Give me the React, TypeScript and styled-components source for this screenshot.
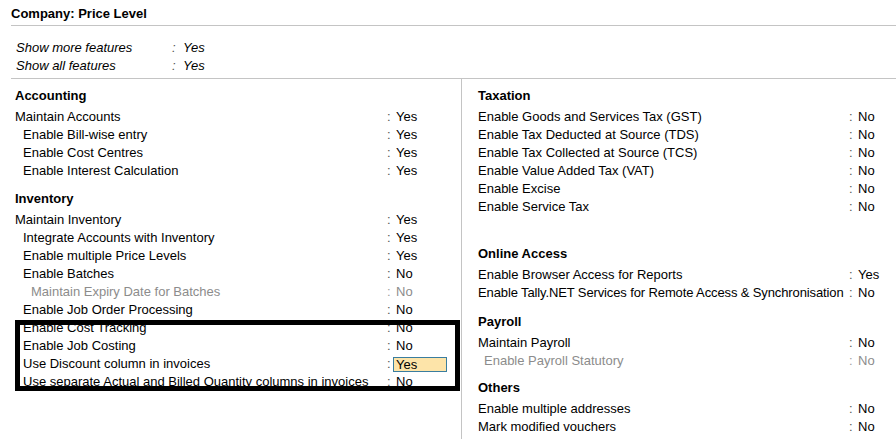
import React from "react";
import styled, { createGlobalStyle, css } from "styled-components";

const Global = createGlobalStyle`
  html, body { margin: 0; padding: 0; background: #ffffff; }
  body {
    font-family: "Liberation Sans", Arial, sans-serif;
    font-size: 13px;
    color: #000;
    width: 896px;
    height: 439px;
    overflow: hidden;
  }
`;

const Page = styled.div`
  width: 896px;
  height: 439px;
  display: flex;
  flex-direction: column;
  background: #fff;
`;

const Title = styled.div`
  height: 25px;
  line-height: 28px;
  padding-left: 11px;
  font-weight: bold;
  font-size: 13px;
`;

const Rule = styled.div`
  margin-left: 11px;
  height: 1px;
  background: #c4c4c4;
`;

const Features = styled.div`
  padding: 13px 0 3px 16px;
`;

const FeatureRow = styled.div`
  display: grid;
  grid-template-columns: 156px 11px auto;
  height: 18px;
  line-height: 18px;
  font-style: italic;
`;

const FeatureColon = styled.span`
  color: #555;
`;

const Main = styled.div`
  flex: 1;
  display: grid;
  grid-template-columns: 461px 1fr;
`;

const Column = styled.div<{ $right?: boolean }>`
  padding-top: 8px;
  padding-left: ${(p) => (p.$right ? "16px" : "15px")};
  ${(p) =>
    p.$right &&
    css`
      border-left: 1px solid #c4c4c4;
    `}
`;

const Section = styled.div<{ $gap?: number }>`
  margin-top: ${(p) => p.$gap ?? 0}px;
`;

const Heading = styled.div`
  height: 18px;
  line-height: 18px;
  font-weight: bold;
  margin-bottom: 3px;
`;

const Row = styled.div<{ $labelWidth: number }>`
  display: grid;
  grid-template-columns: ${(p) => p.$labelWidth}px 9px auto;
  height: 18px;
  line-height: 18px;
  white-space: nowrap;
`;

const Label = styled.span<{ $indent: number; $dim?: boolean; $tight?: boolean }>`
  padding-left: ${(p) => p.$indent}px;
  color: ${(p) => (p.$dim ? "#8c8c8c" : "#000")};
  letter-spacing: ${(p) => (p.$tight ? "-0.12px" : "normal")};
  overflow: hidden;
`;

const Colon = styled.span<{ $dim?: boolean }>`
  color: ${(p) => (p.$dim ? "#a0a0a0" : "#555")};
`;

const Value = styled.span<{ $dim?: boolean; $active?: boolean }>`
  color: ${(p) => (p.$dim ? "#8c8c8c" : "#000")};
  ${(p) =>
    p.$active &&
    css`
      box-sizing: border-box;
      width: 54px;
      height: 15px;
      line-height: 13px;
      margin: 2px 0 0 -3px;
      padding-left: 2px;
      background: #fde4a9;
      border: 1px solid #3a7d9f;
    `}
`;

const Spacer = styled.div`
  height: 18px;
`;

const Marked = styled.div`
  position: relative;
  &::after {
    content: "";
    position: absolute;
    left: 0;
    right: 1px;
    top: 1px;
    bottom: 0;
    border: 5px solid #000;
    pointer-events: none;
  }
`;

type Item = {
  label: string;
  value: string;
  indent?: number;
  dim?: boolean;
  active?: boolean;
  tight?: boolean;
};

const Line = ({ item, w }: { item: Item; w: number }) => (
  <Row $labelWidth={w}>
    <Label $indent={item.indent ?? 0} $dim={item.dim} $tight={item.tight}>
      {item.label}
    </Label>
    <Colon $dim={item.dim}>:</Colon>
    <Value $dim={item.dim} $active={item.active}>
      {item.value}
    </Value>
  </Row>
);

const LW = 372;
const RW = 371;

const accounting: Item[] = [
  { label: "Maintain Accounts", value: "Yes" },
  { label: "Enable Bill-wise entry", value: "Yes", indent: 8 },
  { label: "Enable Cost Centres", value: "Yes", indent: 8 },
  { label: "Enable Interest Calculation", value: "Yes", indent: 8 },
];

const inventory: Item[] = [
  { label: "Maintain Inventory", value: "Yes" },
  { label: "Integrate Accounts with Inventory", value: "Yes", indent: 8 },
  { label: "Enable multiple Price Levels", value: "Yes", indent: 8 },
  { label: "Enable Batches", value: "No", indent: 8 },
  { label: "Maintain Expiry Date for Batches", value: "No", indent: 16, dim: true },
  { label: "Enable Job Order Processing", value: "No", indent: 8 },
];

const marked: Item[] = [
  { label: "Enable Cost Tracking", value: "No", indent: 8 },
  { label: "Enable Job Costing", value: "No", indent: 8 },
  { label: "Use Discount column in invoices", value: "Yes", indent: 8, active: true },
  { label: "Use separate Actual and Billed Quantity columns in invoices", value: "No", indent: 8 },
];

const taxation: Item[] = [
  { label: "Enable Goods and Services Tax (GST)", value: "No" },
  { label: "Enable Tax Deducted at Source (TDS)", value: "No" },
  { label: "Enable Tax Collected at Source (TCS)", value: "No" },
  { label: "Enable Value Added Tax (VAT)", value: "No" },
  { label: "Enable Excise", value: "No" },
  { label: "Enable Service Tax", value: "No" },
];

const online: Item[] = [
  { label: "Enable Browser Access for Reports", value: "Yes" },
  {
    label: "Enable Tally.NET Services for Remote Access & Synchronisation",
    value: "No",
    tight: true,
  },
];

const payroll: Item[] = [
  { label: "Maintain Payroll", value: "No" },
  { label: "Enable Payroll Statutory", value: "No", indent: 6, dim: true },
];

const others: Item[] = [
  { label: "Enable multiple addresses", value: "No" },
  { label: "Mark modified vouchers", value: "No" },
];

export default function App() {
  return (
    <Page>
      <Global />
      <Title>Company: Price Level</Title>
      <Rule />
      <Features>
        <FeatureRow>
          <span>Show more features</span>
          <FeatureColon>:</FeatureColon>
          <span>Yes</span>
        </FeatureRow>
        <FeatureRow>
          <span>Show all features</span>
          <FeatureColon>:</FeatureColon>
          <span>Yes</span>
        </FeatureRow>
      </Features>
      <Rule />
      <Main>
        <Column>
          <Section>
            <Heading>Accounting</Heading>
            {accounting.map((i) => (
              <Line key={i.label} item={i} w={LW} />
            ))}
          </Section>
          <Section $gap={10}>
            <Heading>Inventory</Heading>
            {inventory.map((i) => (
              <Line key={i.label} item={i} w={LW} />
            ))}
            <Marked>
              {marked.map((i) => (
                <Line key={i.label} item={i} w={LW} />
              ))}
            </Marked>
          </Section>
        </Column>
        <Column $right>
          <Section>
            <Heading>Taxation</Heading>
            {taxation.map((i) => (
              <Line key={i.label} item={i} w={RW} />
            ))}
            <Spacer />
          </Section>
          <Section $gap={11}>
            <Heading>Online Access</Heading>
            {online.map((i) => (
              <Line key={i.label} item={i} w={RW} />
            ))}
          </Section>
          <Section $gap={11}>
            <Heading>Payroll</Heading>
            {payroll.map((i) => (
              <Line key={i.label} item={i} w={RW} />
            ))}
          </Section>
          <Section $gap={9}>
            <Heading>Others</Heading>
            {others.map((i) => (
              <Line key={i.label} item={i} w={RW} />
            ))}
          </Section>
        </Column>
      </Main>
    </Page>
  );
}
